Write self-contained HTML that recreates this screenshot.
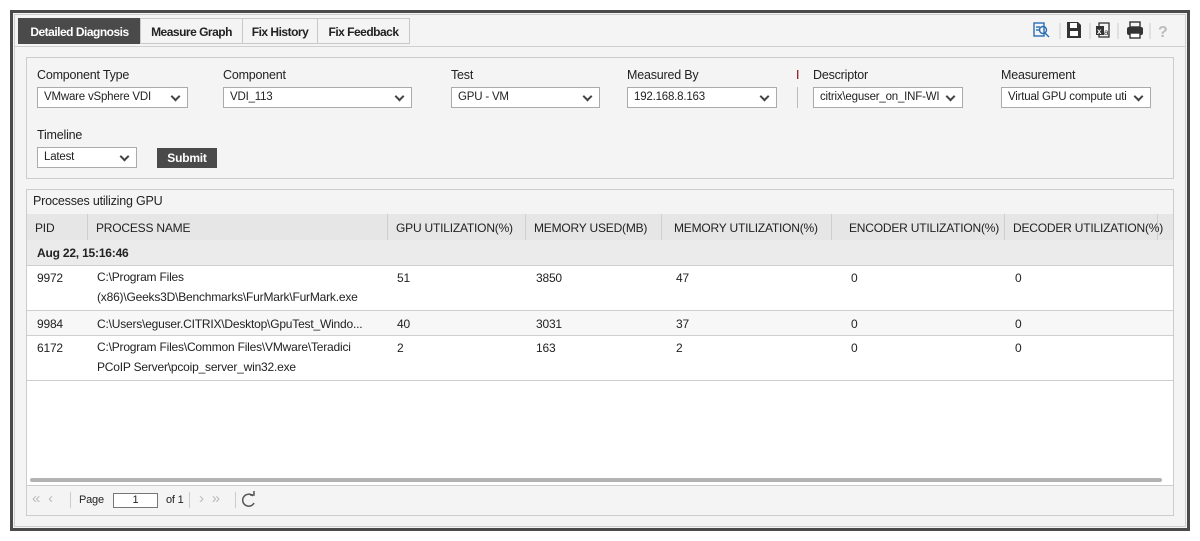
<!DOCTYPE html>
<html><head><meta charset="utf-8"><style>
*{box-sizing:border-box;margin:0;padding:0}
body{width:1200px;height:541px;background:#fff;font-family:"Liberation Sans",sans-serif;font-size:12px;color:#222;position:relative;overflow:hidden;letter-spacing:-0.2px}
.a{position:absolute}
.frame{left:10px;top:10px;width:1180px;height:521px;border:3px solid #4a4a4a;background:#f3f3f3}
.inner{left:14px;top:14px;width:1172px;height:513px;border:1px solid #cfcfcf;background:#f4f4f4}
.tab{top:18px;height:26px;line-height:26px;text-align:center;border:1px solid #c8c8c8;background:#f4f4f4;font-weight:bold;color:#222;letter-spacing:-0.5px}
.sel{height:21px;border:1px solid #aaa;background:#fff;padding:0 6px;line-height:19px;font-size:11.5px;white-space:nowrap;overflow:hidden}
.sel:after{content:"";position:absolute;right:8px;top:5px;width:5px;height:5px;border-right:2px solid #444;border-bottom:2px solid #444;transform:rotate(45deg)}
.lbl{font-size:12.5px;color:#222}
.grid{left:26px;top:189px;width:1148px;height:327px;border:1px solid #ccc;background:#fff}
.hdr{background:#e6e6e6}
.c{position:absolute;white-space:nowrap}
.vl{position:absolute;top:214px;width:1px;height:26px;background:#cfcfcf}
.hl{position:absolute;left:27px;width:1146px;height:1px;background:#cfcfcf}
</style></head><body>
<div class="a frame"></div>
<div class="a inner"></div>
<div class="a" style="left:14px;top:46px;width:1172px;height:1px;background:#d0d0d0"></div>
<div class="a tab" style="left:18px;width:123px;background:#4a4a4a;color:#fff;border-color:#4a4a4a">Detailed Diagnosis</div>
<div class="a tab" style="left:140px;width:103px">Measure Graph</div>
<div class="a tab" style="left:242px;width:76px">Fix History</div>
<div class="a tab" style="left:317px;width:93px">Fix Feedback</div>
<svg class="a" style="left:1030px;top:20px" width="150" height="22">
<g stroke="#2a6fb5" fill="none" stroke-width="1.4"><rect x="4" y="3" width="10" height="13"/><line x1="6" y1="7" x2="10" y2="7"/><line x1="6" y1="10" x2="9" y2="10"/><circle cx="13" cy="10" r="3.5"/><line x1="15" y1="13" x2="19" y2="17"/></g>
<line x1="30" y1="3" x2="30" y2="19" stroke="#ccc"/>
<g fill="#333"><path d="M37 2h11l3 3v13h-14z"/></g><rect x="40" y="3" width="7" height="5" fill="#fff"/><rect x="40" y="11" width="8" height="5" fill="#fff"/>
<line x1="60" y1="3" x2="60" y2="19" stroke="#ccc"/>
<rect x="69" y="3" width="10" height="14" fill="none" stroke="#333" stroke-width="1.3"/><rect x="66" y="6" width="8" height="9" fill="#333"/><text x="67" y="14" fill="#fff" font-size="8" font-weight="bold">x</text><text x="74" y="15" fill="#333" font-size="8">a</text>
<line x1="88" y1="3" x2="88" y2="19" stroke="#ccc"/>
<rect x="100" y="2" width="10" height="5" fill="none" stroke="#333" stroke-width="1.4"/><rect x="97" y="7" width="16" height="8" rx="2" fill="#333"/><rect x="100" y="13" width="10" height="5" fill="#fff" stroke="#333" stroke-width="1.4"/>
<line x1="120" y1="3" x2="120" y2="19" stroke="#ccc"/>
<text x="128" y="17" font-size="16" font-weight="bold" fill="#bbb">?</text>
</svg>
<div class="a" style="left:26px;top:57px;width:1148px;height:122px;border:1px solid #ccc;background:#f4f4f4"></div>
<div class="a lbl" style="left:37px;top:68px">Component Type</div>
<div class="a sel" style="left:37px;top:87px;width:151px">VMware vSphere VDI</div>
<div class="a lbl" style="left:223px;top:68px">Component</div>
<div class="a sel" style="left:223px;top:87px;width:189px">VDI_113</div>
<div class="a lbl" style="left:451px;top:68px">Test</div>
<div class="a sel" style="left:451px;top:87px;width:149px">GPU - VM</div>
<div class="a lbl" style="left:627px;top:68px">Measured By</div>
<div class="a sel" style="left:627px;top:87px;width:150px">192.168.8.163</div>
<div class="a lbl" style="left:796px;top:68px;color:#800">I</div>
<div class="a" style="left:797px;top:87px;width:1px;height:21px;background:#bbb"></div>
<div class="a lbl" style="left:813px;top:68px">Descriptor</div>
<div class="a sel" style="left:813px;top:87px;width:150px">citrix\eguser_on_INF-WI</div>
<div class="a lbl" style="left:1001px;top:68px">Measurement</div>
<div class="a sel" style="left:1001px;top:87px;width:150px">Virtual GPU compute uti</div>
<div class="a lbl" style="left:37px;top:128px">Timeline</div>
<div class="a sel" style="left:37px;top:147px;width:100px">Latest</div>
<div class="a" style="left:157px;top:148px;width:60px;height:20px;background:#4a4a4a;color:#fff;font-weight:bold;text-align:center;line-height:20px">Submit</div>
<div class="a grid"></div>
<div class="a" style="left:27px;top:190px;width:1146px;height:24px;background:#f4f4f4"></div>
<div class="a" style="left:33px;top:194px;font-size:12.5px">Processes utilizing GPU</div>
<div class="a hdr" style="left:27px;top:214px;width:1146px;height:26px"></div>
<div class="vl" style="left:87px"></div><div class="vl" style="left:387px"></div><div class="vl" style="left:525px"></div><div class="vl" style="left:661px"></div><div class="vl" style="left:831px"></div><div class="vl" style="left:1004px"></div><div class="vl" style="left:1157px"></div>
<div class="c" style="left:35px;top:221px">PID</div>
<div class="c" style="left:96px;top:221px">PROCESS NAME</div>
<div class="c" style="left:396px;top:221px">GPU UTILIZATION(%)</div>
<div class="c" style="left:534px;top:221px">MEMORY USED(MB)</div>
<div class="c" style="left:674px;top:221px">MEMORY UTILIZATION(%)</div>
<div class="c" style="left:849px;top:221px">ENCODER UTILIZATION(%)</div>
<div class="c" style="left:1013px;top:221px">DECODER UTILIZATION(%)</div>
<div class="a" style="left:27px;top:240px;width:1146px;height:25px;background:#ebebeb"></div>
<div class="c" style="left:37px;top:246px;font-weight:bold">Aug 22, 15:16:46</div>
<div class="hl" style="top:265px"></div>
<div class="hl" style="top:310px"></div>
<div class="a" style="left:27px;top:311px;width:1146px;height:24px;background:#f7f7f7"></div>
<div class="hl" style="top:335px"></div>
<div class="hl" style="top:380px"></div>
<div class="c" style="left:37px;top:271px">9972</div>
<div class="c" style="left:97px;top:267px;line-height:20px">C:\Program Files<br>(x86)\Geeks3D\Benchmarks\FurMark\FurMark.exe</div>
<div class="c" style="left:397px;top:271px">51</div><div class="c" style="left:536px;top:271px">3850</div><div class="c" style="left:676px;top:271px">47</div><div class="c" style="left:851px;top:271px">0</div><div class="c" style="left:1015px;top:271px">0</div>
<div class="c" style="left:37px;top:317px">9984</div>
<div class="c" style="left:97px;top:317px">C:\Users\eguser.CITRIX\Desktop\GpuTest_Windo...</div>
<div class="c" style="left:397px;top:317px">40</div><div class="c" style="left:536px;top:317px">3031</div><div class="c" style="left:676px;top:317px">37</div><div class="c" style="left:851px;top:317px">0</div><div class="c" style="left:1015px;top:317px">0</div>
<div class="c" style="left:37px;top:341px">6172</div>
<div class="c" style="left:97px;top:337px;line-height:20px">C:\Program Files\Common Files\VMware\Teradici<br>PCoIP Server\pcoip_server_win32.exe</div>
<div class="c" style="left:397px;top:341px">2</div><div class="c" style="left:536px;top:341px">163</div><div class="c" style="left:676px;top:341px">2</div><div class="c" style="left:851px;top:341px">0</div><div class="c" style="left:1015px;top:341px">0</div>
<div class="a" style="left:30px;top:478px;width:1132px;height:4px;border-radius:2px;background:#b3b3b3"></div>
<div class="a" style="left:27px;top:485px;width:1146px;height:30px;background:#f4f4f4;border-top:1px solid #ccc"></div>
<div class="c" style="left:32px;top:490px;font-size:15px;color:#bbb">«&nbsp;&nbsp;‹</div>
<div class="a" style="left:70px;top:492px;width:1px;height:16px;background:#ccc"></div>
<div class="c" style="left:79px;top:494px;font-size:11px">Page</div>
<div class="a" style="left:113px;top:493px;width:45px;height:15px;border:1px solid #777;background:#fff;font-size:11px;text-align:center;line-height:13px">1</div>
<div class="c" style="left:166px;top:494px;font-size:11px">of 1</div>
<div class="a" style="left:189px;top:492px;width:1px;height:16px;background:#ccc"></div>
<div class="c" style="left:199px;top:490px;font-size:15px;color:#bbb">›&nbsp;&nbsp;»</div>
<div class="a" style="left:235px;top:492px;width:1px;height:16px;background:#ccc"></div>
<svg class="a" style="left:240px;top:491px" width="18" height="18"><path d="M13 5A6 6 0 1 0 14 12" fill="none" stroke="#555" stroke-width="1.5"/><path d="M10 4h4v-4" fill="none" stroke="#555" stroke-width="1.5"/></svg>
</body></html>
